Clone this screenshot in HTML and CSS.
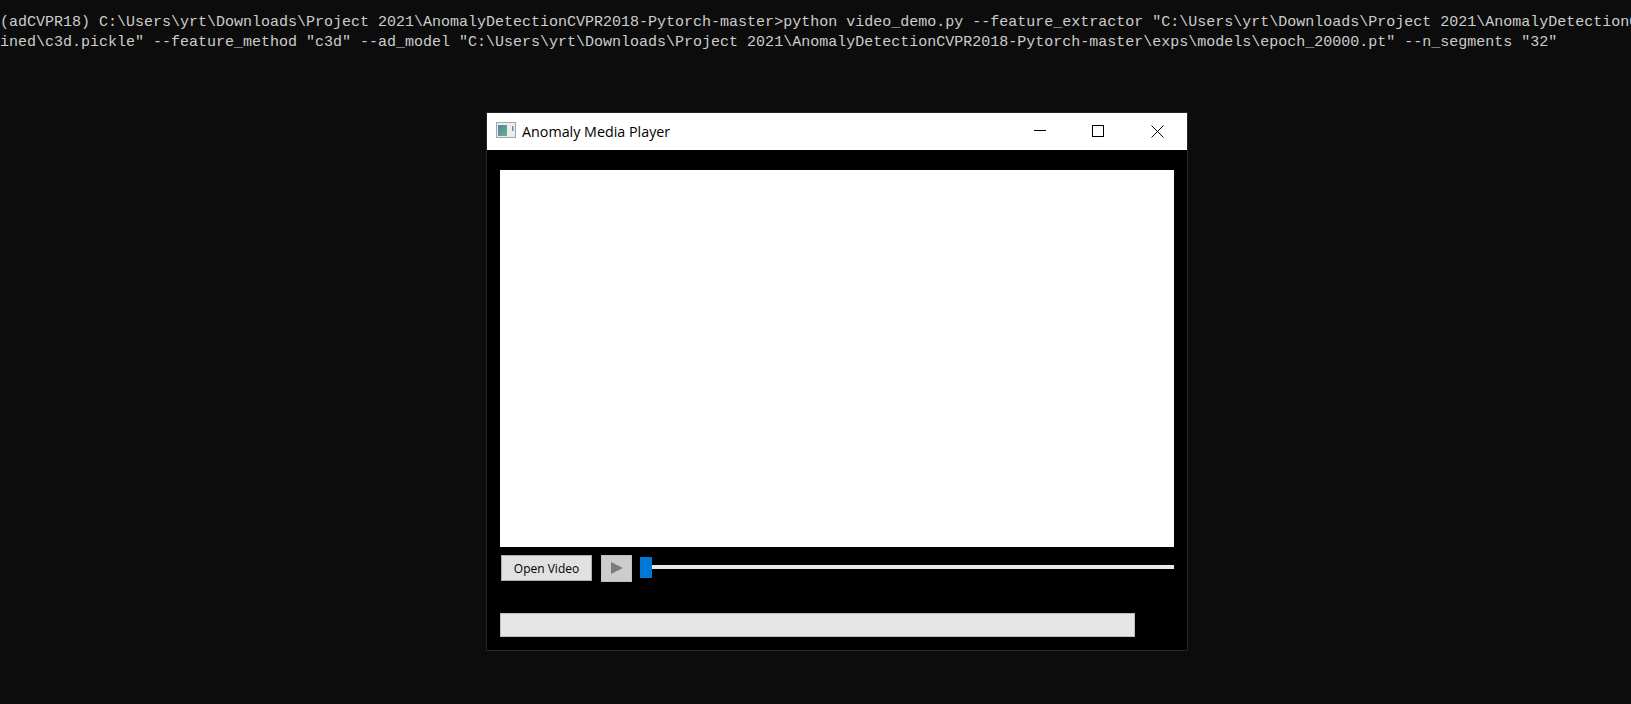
FILE: index.html
```html
<!DOCTYPE html>
<html lang="en">
<head>
<meta charset="utf-8">
<title>Anomaly Media Player</title>
<link rel="stylesheet" href="styles.css">
</head>
<body>
<pre class="terminal">(adCVPR18) C:\Users\yrt\Downloads\Project 2021\AnomalyDetectionCVPR2018-Pytorch-master>python video_demo.py --feature_extractor "C:\Users\yrt\Downloads\Project 2021\AnomalyDetectionC
ined\c3d.pickle" --feature_method "c3d" --ad_model "C:\Users\yrt\Downloads\Project 2021\AnomalyDetectionCVPR2018-Pytorch-master\exps\models\epoch_20000.pt" --n_segments "32"</pre>
<section class="window">
  <header class="titlebar">
    <svg class="app-icon" width="20" height="16" viewBox="0 0 20 16" aria-hidden="true">
      <defs>
        <linearGradient id="pic" x1="0" y1="0" x2="1" y2="1">
          <stop offset="0" stop-color="#4d86a8"/>
          <stop offset="1" stop-color="#6fae84"/>
        </linearGradient>
      </defs>
      <rect x="0.5" y="0.5" width="19" height="15" fill="#eceeee" stroke="#a3a7ab"/>
      <rect x="2" y="3" width="9" height="11" fill="url(#pic)"/>
      <rect x="16" y="4" width="1.5" height="5" fill="#5f9d88"/>
    </svg>
    <span class="title">Anomaly Media Player</span>
    <div class="controls">
      <span class="ctl ctl-min">
        <svg width="12" height="12" viewBox="0 0 12 12" aria-hidden="true"><path d="M0 5.5H12" stroke="#000" fill="none"/></svg>
      </span>
      <span class="ctl ctl-max">
        <svg width="12" height="12" viewBox="0 0 12 12" aria-hidden="true"><rect x="0.5" y="0.5" width="11" height="11" stroke="#000" fill="none"/></svg>
      </span>
      <span class="ctl">
        <svg width="13" height="13" viewBox="0 0 13 13" aria-hidden="true"><path d="M0.5 0.5L12.5 12.5M12.5 0.5L0.5 12.5" stroke="#000" fill="none"/></svg>
      </span>
    </div>
  </header>
  <div class="content">
    <div class="video"></div>
    <div class="toolbar">
      <button class="open-btn" type="button">Open Video</button>
      <button class="play-btn" type="button" aria-label="Play">
        <svg width="12" height="12" viewBox="0 0 12 12" aria-hidden="true"><path d="M0 0L12 6L0 12Z" fill="#7b7b7b"/></svg>
      </button>
      <div class="slider"><span class="handle"></span></div>
    </div>
    <div class="status"></div>
  </div>
</section>
</body>
</html>
```

FILE: styles.css
```css
* { box-sizing: border-box; }
html, body { margin: 0; height: 100%; }
body {
  background: #0c0c0c;
  overflow: hidden;
  position: relative;
}
.terminal {
  margin: 0;
  padding-top: 13px;
  font-family: "Liberation Mono", "DejaVu Sans Mono", monospace;
  font-size: 15px;
  line-height: 20px;
  color: #cccccc;
  white-space: pre;
}
.window {
  position: absolute;
  left: 486px;
  top: 112px;
  width: 702px;
  height: 539px;
  border: 1px solid #262626;
  display: flex;
  flex-direction: column;
  background: #000;
}
.titlebar {
  height: 37px;
  background: #fff;
  display: flex;
  align-items: center;
  padding-left: 9px;
  font-family: "Open Sans", "Noto Sans", sans-serif;
  font-size: 14.3px;
  color: #000;
}
.app-icon { flex: none; margin-bottom: 3px; }
.title { margin-left: 6px; padding-bottom: 1px; }
.controls {
  margin-left: auto;
  margin-right: 1px;
  padding-bottom: 1px;
  display: flex;
  height: 100%;
}
.ctl {
  width: 58px;
  display: flex;
  align-items: center;
  justify-content: center;
}
.ctl-min { width: 56px; }
.ctl-max { width: 60px; }
.content {
  flex: 1;
  display: flex;
  flex-direction: column;
  padding: 20px 13px 13px;
}
.video { height: 377px; background: #fff; }
.toolbar {
  display: flex;
  align-items: flex-start;
  margin-top: 8px;
  height: 27px;
}
.open-btn {
  width: 91px;
  height: 26px;
  margin-left: 1px;
  padding: 0;
  background: #e1e1e1;
  border: 1px solid #adadad;
  font-family: "Open Sans", "Noto Sans", sans-serif;
  font-size: 12px;
  color: #000;
}
.play-btn {
  width: 31px;
  height: 27px;
  margin-left: 9px;
  padding: 0 0 2px;
  background: #cccccc;
  border: 1px solid #bfbfbf;
  display: flex;
  align-items: center;
  justify-content: center;
}
.slider {
  flex: 1;
  margin-left: 8px;
  height: 21px;
  margin-top: 2px;
  position: relative;
  display: flex;
  align-items: center;
}
.slider::before {
  content: "";
  flex: 1;
  height: 4px;
  margin-bottom: 1px;
  background: #e7eaea;
}
.handle {
  position: absolute;
  left: 0;
  top: 0;
  width: 12px;
  height: 21px;
  background: #0078d7;
}
.status {
  width: 635px;
  height: 24px;
  margin-top: 31px;
  background: #e6e6e6;
  border: 1px solid #bcbcbc;
}
```
